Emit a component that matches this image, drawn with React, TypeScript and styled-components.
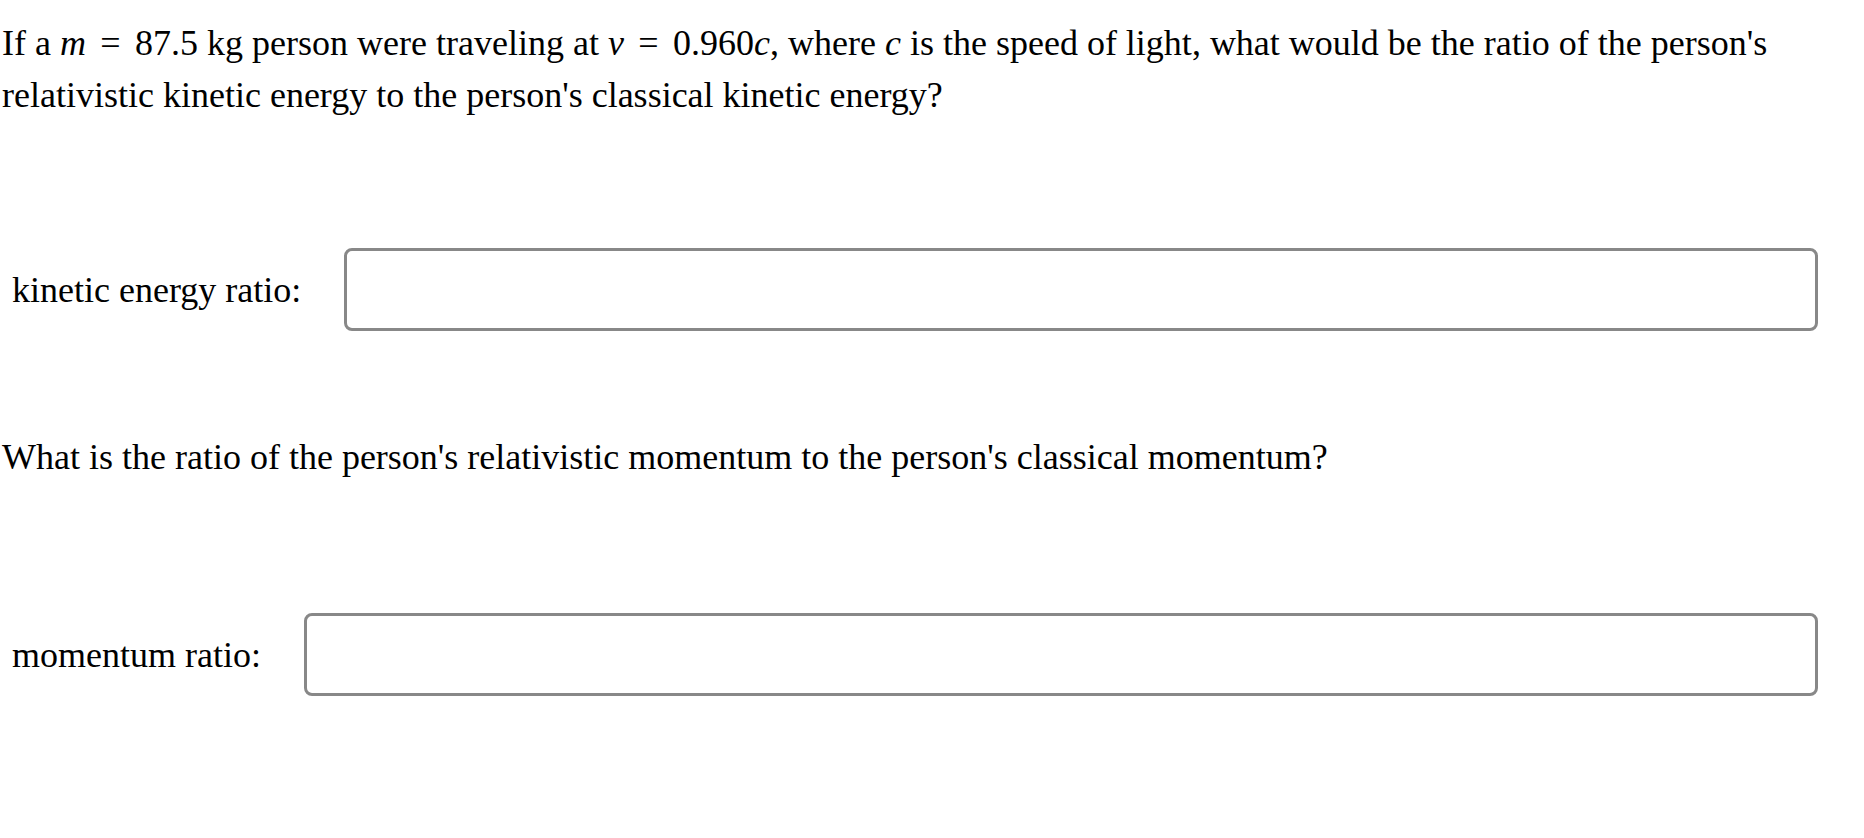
import styled, { createGlobalStyle } from "styled-components";

const GlobalStyle = createGlobalStyle`
  html, body {
    margin: 0;
    padding: 0;
    background: #ffffff;
  }
  body {
    font-family: "Liberation Serif", "Times New Roman", serif;
    color: #000000;
  }
`;

const Page = styled.div`
  padding: 17px 46px 0 2px;
  width: 1864px;
  box-sizing: border-box;
`;

const Question = styled.p<{ $top: number }>`
  margin: ${(p) => p.$top}px 0 0 0;
  font-size: 36px;
  line-height: 52px;
`;

const Var = styled.i`
  font-style: italic;
`;

const Eq = styled.span`
  padding: 0 0.4em;
`;

const AnswerRow = styled.div<{ $top: number }>`
  display: flex;
  align-items: center;
  gap: 43px;
  margin-top: ${(p) => p.$top}px;
  padding-left: 10px;
`;

const Label = styled.label`
  font-size: 36px;
  line-height: 42px;
  white-space: nowrap;
`;

const AnswerInput = styled.input`
  flex: 1;
  height: 83px;
  box-sizing: border-box;
  border: 3px solid #888888;
  border-radius: 8px;
  background: #ffffff;
  font-size: 32px;
  font-family: inherit;
  padding: 0 12px;
  outline: none;
`;

export default function App() {
  return (
    <>
      <GlobalStyle />
      <Page>
        <Question $top={0}>
          If a <Var>m</Var>
          <Eq>=</Eq>87.5 kg person were traveling at <Var>v</Var>
          <Eq>=</Eq>0.960<Var>c</Var>, where <Var>c</Var> is the speed of
          light, what would be the ratio of the person's relativistic kinetic
          energy to the person's classical kinetic energy?
        </Question>
        <AnswerRow $top={127}>
          <Label htmlFor="ke">kinetic energy ratio:</Label>
          <AnswerInput id="ke" type="text" />
        </AnswerRow>
        <Question $top={100}>
          What is the ratio of the person's relativistic momentum to the
          person's classical momentum?
        </Question>
        <AnswerRow $top={130}>
          <Label htmlFor="mom">momentum ratio:</Label>
          <AnswerInput id="mom" type="text" />
        </AnswerRow>
      </Page>
    </>
  );
}
